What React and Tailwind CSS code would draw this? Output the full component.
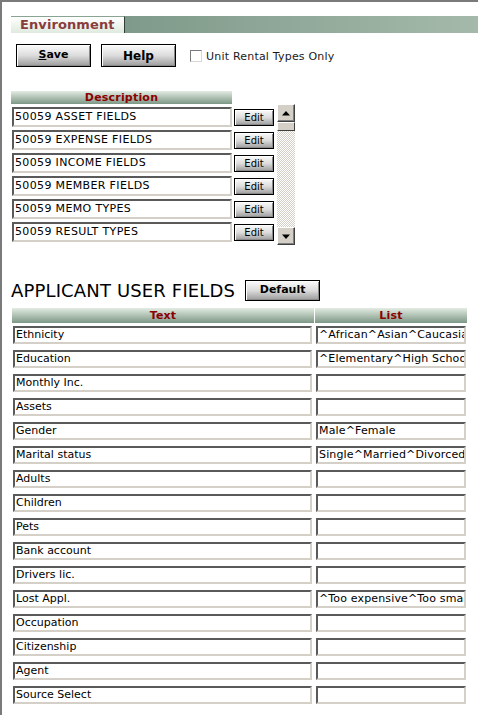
import React from "react";

const font = { fontFamily: '"DejaVu Sans", Verdana, sans-serif' };

const descRows = [
  "50059 ASSET FIELDS",
  "50059 EXPENSE FIELDS",
  "50059 INCOME FIELDS",
  "50059 MEMBER FIELDS",
  "50059 MEMO TYPES",
  "50059 RESULT TYPES",
];

const fields = [
  ["Ethnicity", "^African^Asian^Caucasian^Hispanic^Other"],
  ["Education", "^Elementary^High School^College^Graduate"],
  ["Monthly Inc.", ""],
  ["Assets", ""],
  ["Gender", "Male^Female"],
  ["Marital status", "Single^Married^Divorced^Widowed"],
  ["Adults", ""],
  ["Children", ""],
  ["Pets", ""],
  ["Bank account", ""],
  ["Drivers lic.", ""],
  ["Lost Appl.", "^Too expensive^Too small^Other"],
  ["Occupation", ""],
  ["Citizenship", ""],
  ["Agent", ""],
  ["Source Select", ""],
];

function Btn({ children, className = "" }) {
  return (
    <div
      className={
        "flex items-center justify-center border border-black bg-gradient-to-b from-[#fbfbfb] via-[#dcdcdc] to-[#9c9c9c] shadow-[inset_1px_1px_0_#ffffff,inset_-1px_-1px_0_#8a8a8a] text-black " +
        className
      }
    >
      {children}
    </div>
  );
}

function Field({ children, className = "" }) {
  return (
    <div
      className={
        "flex items-center overflow-hidden whitespace-nowrap border-2 border-t-[#5a5a5a] border-l-[#5a5a5a] border-b-[#d4d0c8] border-r-[#d4d0c8] bg-white pl-[1px] text-[11px] text-black " +
        className
      }
    >
      {children}
    </div>
  );
}

function ScrollBtn({ up }) {
  return (
    <div className="flex h-[18px] w-[18px] items-center justify-center border border-t-white border-l-white border-b-[#404040] border-r-[#404040] bg-[#d4d0c8] shadow-[inset_-1px_-1px_0_#808080]">
      <svg width="8" height="5" viewBox="0 0 8 5">
        {up ? (
          <polygon points="4,0 8,4.5 0,4.5" fill="#000" />
        ) : (
          <polygon points="0,0.5 8,0.5 4,5" fill="#000" />
        )}
      </svg>
    </div>
  );
}

export default function App() {
  return (
    <div
      className="h-[715px] w-[478px] overflow-hidden border-l-2 border-t-2 border-[#7a7a7a] bg-white"
      style={font}
    >
      {/* Tab bar */}
      <div className="ml-[9px] mt-[14px] flex h-[17px]">
        <div className="flex w-[114px] items-start border-r border-t border-r-[#2f3f35] border-t-[#8aa494] bg-gradient-to-b from-white to-[#dfeadf] pl-[9px]">
          <span className="text-[13px] font-bold leading-[16px] tracking-[0.1px] text-[#8a3c3c]">
            Environment
          </span>
        </div>
        <div className="flex-1 bg-gradient-to-r from-[#7f9a8a] to-[#a4b9aa]" />
      </div>

      {/* Buttons row */}
      <div className="ml-[14px] mt-[11px] flex items-center">
        <Btn className="h-[23px] w-[75px] text-[11px] font-bold">
          <span>
            <span className="underline">S</span>ave
          </span>
        </Btn>
        <Btn className="ml-[10px] h-[23px] w-[75px] text-[12px] font-bold">Help</Btn>
        <div className="ml-[14px] mt-[1px] h-[12px] w-[12px] border border-t-[#7a7a7a] border-l-[#7a7a7a] border-b-[#d8d8d8] border-r-[#d8d8d8] bg-white" />
        <span className="ml-[4px] mt-[4px] text-[11px] tracking-[0.2px] text-[#1a1a1a]">
          Unit Rental Types Only
        </span>
      </div>

      {/* Description list */}
      <div className="ml-[9px] mt-[24px] flex">
        <div className="flex w-[263px] flex-col">
          <div className="flex h-[13px] w-[221px] items-center justify-center bg-gradient-to-b from-[#e4ece3] to-[#7d9886] text-[11px] font-bold leading-none tracking-[0.2px] text-[#8b0000]">
            Description
          </div>
          <div className="mt-[3px] flex flex-col gap-[3px]">
            {descRows.map((r) => (
              <div key={r} className="flex h-[20px] items-center">
                <Field className="ml-[1px] h-[20px] w-[220px] tracking-[0.35px]">{r}</Field>
                <Btn className="ml-[2px] h-[17px] w-[40px] text-[10px]">Edit</Btn>
              </div>
            ))}
          </div>
        </div>
        <div className="ml-[3px] mt-[13px] flex h-[141px] w-[18px] flex-col">
          <ScrollBtn up />
          <div className="h-[9px] w-[18px] border border-t-white border-l-white border-b-[#404040] border-r-[#404040] bg-[#d4d0c8]" />
          <div className="flex-1 bg-[conic-gradient(#d4d0c8_25%,#ffffff_0_50%,#d4d0c8_0_75%,#ffffff_0)] bg-[length:2px_2px]" />
          <ScrollBtn />
        </div>
      </div>

      {/* Applicant user fields */}
      <div className="ml-[9px] mt-[35px] flex items-center">
        <span className="text-[18px] leading-[20px] tracking-[0.15px] text-black">
          APPLICANT USER FIELDS
        </span>
        <Btn className="ml-[10px] h-[21px] w-[75px] text-[11px] font-bold">Default</Btn>
      </div>

      <div className="ml-[10px] mt-[7px] flex w-[455px] flex-col">
        <div className="flex h-[15px]">
          <div className="flex w-[302px] items-center justify-center bg-gradient-to-b from-[#e4ece3] to-[#7d9886] text-[11px] font-bold leading-none tracking-[0.2px] text-[#8b0000]">
            Text
          </div>
          <div className="ml-[1px] flex flex-1 items-center justify-center bg-gradient-to-b from-[#e4ece3] to-[#7d9886] text-[11px] font-bold leading-none tracking-[0.2px] text-[#8b0000]">
            List
          </div>
        </div>
        <div className="mt-[3px] flex flex-col gap-[6px]">
          {fields.map(([t, l]) => (
            <div key={t} className="flex h-[18px]">
              <Field className="ml-[1px] h-[18px] w-[299px]">{t}</Field>
              <Field className="ml-[4px] h-[18px] w-[150px] tracking-[0.15px]">{l}</Field>
            </div>
          ))}
        </div>
      </div>
    </div>
  );
}
